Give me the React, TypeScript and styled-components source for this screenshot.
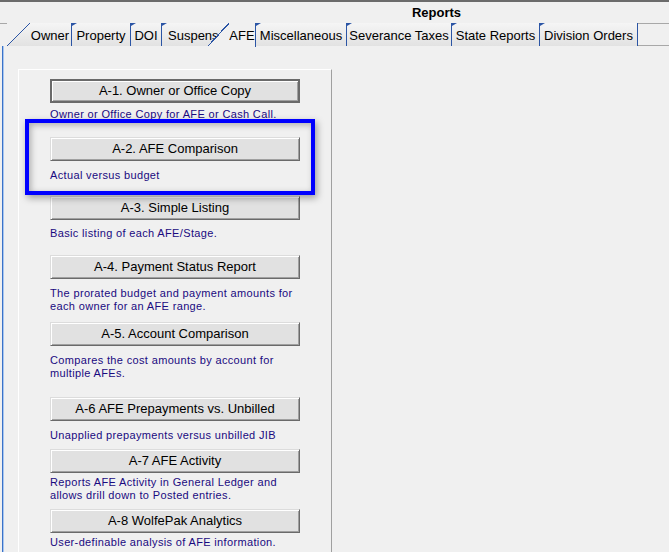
import React from 'react';
import styled, { createGlobalStyle, css } from 'styled-components';

const tabBlue = '#2b55a5';
const pageBg = '#f0f0f0';

const GlobalStyle = createGlobalStyle`
  html, body {
    margin: 0;
    padding: 0;
    background: ${pageBg};
    overflow: hidden;
  }
  body {
    font-family: "Liberation Sans", Arial, sans-serif;
  }
`;

type Tab = { label: string; width: number; kind?: 'first' | 'cut' | 'active' };

const tabs: Tab[] = [
  { label: 'Owner', width: 65, kind: 'first' },
  { label: 'Property', width: 59 },
  { label: 'DOI', width: 31 },
  { label: 'Suspense', width: 67, kind: 'cut' },
  { label: 'AFE', width: 27, kind: 'active' },
  { label: 'Miscellaneous', width: 91 },
  { label: 'Severance Taxes', width: 105 },
  { label: 'State Reports', width: 88 },
  { label: 'Division Orders', width: 98 },
];

type Report = { title: string; lines: string[]; mt: number; dmt: number; isDefault?: boolean };

const reports: Report[] = [
  { title: 'A-1. Owner or Office Copy', lines: ['Owner or Office Copy for AFE or Cash Call.'], mt: 9, dmt: 5, isDefault: true },
  { title: 'A-2. AFE Comparison', lines: ['Actual versus budget'], mt: 16, dmt: 8 },
  { title: 'A-3. Simple Listing', lines: ['Basic listing of each AFE/Stage.'], mt: 14, dmt: 7 },
  {
    title: 'A-4. Payment Status Report',
    lines: ['The prorated budget and payment amounts for', 'each owner for an AFE range.'],
    mt: 15,
    dmt: 8,
  },
  {
    title: 'A-5. Account Comparison',
    lines: ['Compares the cost amounts by account for', 'multiple AFEs.'],
    mt: 9,
    dmt: 8,
  },
  { title: 'A-6 AFE Prepayments vs. Unbilled', lines: ['Unapplied prepayments versus unbilled JIB'], mt: 17, dmt: 8 },
  {
    title: 'A-7 AFE Activity',
    lines: ['Reports AFE Activity in General Ledger and', 'allows drill down to Posted entries.'],
    mt: 7,
    dmt: 3,
  },
  { title: 'A-8 WolfePak Analytics', lines: ['User-definable analysis of AFE information.'], mt: 7, dmt: 3 },
];

export default function App() {
  return (
    <>
      <GlobalStyle />
      <TitleBar>Reports</TitleBar>
      <TabStrip>
        {tabs.map((tab, i) => (
          <TabItem key={tab.label} $width={tab.width} $kind={tab.kind} $notch={i > 0 && tab.kind !== 'active'}>
            <TabLabel $kind={tab.kind}>{tab.label}</TabLabel>
          </TabItem>
        ))}
        <StripRest />
      </TabStrip>
      <Panel>
        <Group>
          {reports.map((r) => (
            <ReportBlock key={r.title} $mt={r.mt}>
              <ReportButton $isDefault={r.isDefault}>{r.title}</ReportButton>
              <ReportDesc $mt={r.dmt}>
                {r.lines.map((line) => (
                  <div key={line}>{line}</div>
                ))}
              </ReportDesc>
            </ReportBlock>
          ))}
          <Highlight />
        </Group>
      </Panel>
    </>
  );
}

const TitleBar = styled.div`
  height: 21px;
  border-top: 2px solid #6b6b6b;
  border-bottom: 1px solid #a8a8a8;
  padding-left: 204px;
  text-align: center;
  font-size: 13px;
  font-weight: bold;
  line-height: 21px;
  color: #000;
  box-sizing: content-box;
  margin-bottom: -1px;
`;

const TabStrip = styled.div`
  display: flex;
  height: 23px;
  padding-left: 7px;
  box-sizing: border-box;
  border-bottom: 1px solid ${tabBlue};
  position: relative;
  &::before {
    content: '';
    position: absolute;
    left: 0;
    bottom: -1px;
    width: 7px;
    border-bottom: 1px solid ${pageBg};
  }
`;

const TabItem = styled.div<{ $width: number; $kind?: string; $notch: boolean }>`
  position: relative;
  flex: none;
  width: ${(p) => p.$width}px;
  box-sizing: border-box;
  height: 23px;
  border-right: 1px solid ${tabBlue};
  background: linear-gradient(#f5f5f5, #e2e2e2);
  overflow: hidden;

  ${(p) =>
    p.$notch &&
    css`
      &::after {
        content: '';
        position: absolute;
        left: 0;
        top: 0;
        width: 0;
        height: 0;
        border-top: 3px solid ${tabBlue};
        border-right: 5px solid transparent;
      }
    `}

  ${(p) =>
    p.$kind === 'first' &&
    css`
      &::before {
        content: '';
        position: absolute;
        left: 0;
        top: 0;
        width: 23px;
        height: 23px;
        background: linear-gradient(
          to bottom right,
          ${pageBg} calc(50% - 0.7px),
          ${tabBlue} calc(50% - 0.7px),
          ${tabBlue} calc(50% + 0.5px),
          transparent calc(50% + 0.5px)
        );
      }
    `}

  ${(p) =>
    p.$kind === 'cut' &&
    css`
      border-right: none;
      &::before {
        content: '';
        position: absolute;
        right: 0;
        top: 0;
        width: 21px;
        height: 23px;
        z-index: 1;
        background: linear-gradient(
          to top left,
          ${pageBg} calc(50% - 0.7px),
          ${tabBlue} calc(50% - 0.7px),
          ${tabBlue} calc(50% + 0.5px),
          transparent calc(50% + 0.5px)
        );
      }
      &::after {
        content: '';
        position: absolute;
        left: 0;
        top: 0;
        border-top: 3px solid ${tabBlue};
        border-right: 5px solid transparent;
      }
    `}

  ${(p) =>
    p.$kind === 'active' &&
    css`
      background: ${pageBg};
      height: 24px;
      margin-bottom: -1px;
    `}
`;

const TabLabel = styled.span<{ $kind?: string }>`
  display: block;
  padding-top: 3px;
  font-size: 13px;
  line-height: 19px;
  color: #000;
  white-space: nowrap;
  text-align: center;
  ${(p) => p.$kind === 'first' && 'padding-left: 22px;'}
  ${(p) => p.$kind === 'cut' && 'text-align: left; padding-left: 6px;'}
`;

const StripRest = styled.div`
  flex: 1;
  border-bottom: 1px solid #a8a8a8;
  margin-bottom: -1px;
`;

const Panel = styled.div`
  margin-left: 2px;
  height: 506px;
  border-left: 1px solid #3a72c8;
  box-shadow: inset 1px 0 #a9c6ee;
  padding-top: 23px;
  padding-left: 15px;
  box-sizing: border-box;
  overflow: hidden;
`;

const Group = styled.div`
  position: relative;
  width: 314px;
  height: 620px;
  box-sizing: border-box;
  border-top: 1px solid #fff;
  border-left: 1px solid #fff;
  border-right: 1px solid #a0a0a0;
  padding-left: 31px;
  display: flex;
  flex-direction: column;
`;

const ReportBlock = styled.div<{ $mt: number }>`
  margin-top: ${(p) => p.$mt}px;
`;

const ReportButton = styled.div<{ $isDefault?: boolean }>`
  width: 250px;
  height: 24px;
  box-sizing: border-box;
  background: #e1e1e1;
  border: 1px solid;
  border-color: #dcdcdc #6a6a6a #6a6a6a #dcdcdc;
  box-shadow: inset 1px 1px #fff, inset -1px -1px #a0a0a0;
  font-size: 13px;
  line-height: 22px;
  text-align: center;
  color: #000;
  ${(p) =>
    p.$isDefault &&
    css`
      border: 2px solid #6a6a6a;
      line-height: 20px;
    `}
`;

const ReportDesc = styled.div<{ $mt: number }>`
  margin-top: ${(p) => p.$mt}px;
  font-size: 11px;
  letter-spacing: 0.35px;
  line-height: 13px;
  color: #1a0a80;
`;

const Highlight = styled.div`
  position: absolute;
  left: 6px;
  top: 49px;
  width: 290px;
  height: 76px;
  box-sizing: border-box;
  border: 4px solid #0000ff;
  box-shadow: 2px 3px 7px rgba(0, 0, 0, 0.35), inset 2px 2px 6px rgba(0, 0, 0, 0.28);
`;
